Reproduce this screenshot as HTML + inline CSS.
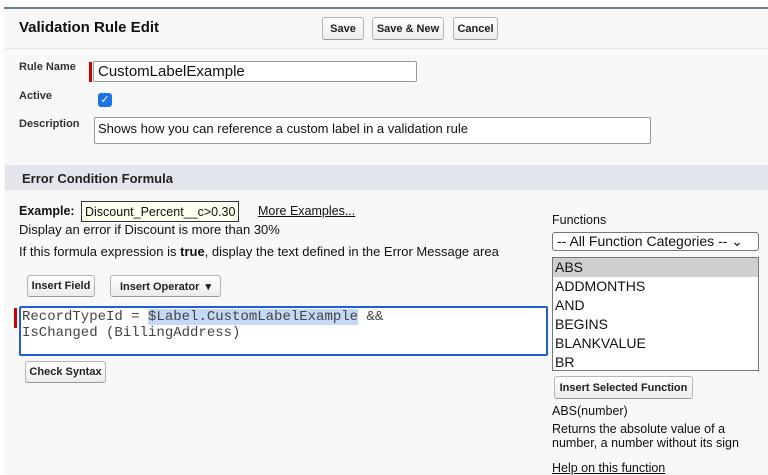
<!DOCTYPE html>
<html><head><style>
*{box-sizing:border-box}
body{margin:0;width:768px;height:475px;overflow:hidden;background:#fff;font-family:"Liberation Sans",sans-serif;font-size:12.5px;color:#111;position:relative}
.a{position:absolute}
.pg{left:4px;top:7px;width:764px;height:468px;background:#f8f8f8;border-top:2px solid #6f7d92}
.btn{position:absolute;border:1px solid #b5b5b5;border-bottom-color:#999;border-radius:3px;background:linear-gradient(#fff,#ececec);font-weight:bold;font-size:11px;display:flex;align-items:center;justify-content:center;color:#222}
.lbl{position:absolute;font-weight:bold;font-size:11px;color:#333}
.inp{position:absolute;background:#fff;border:1px solid #999;border-radius:2px}
</style></head><body>
<div class="a pg"></div>
<div class="a" style="left:19px;top:19px;font-size:15px;font-weight:bold">Validation Rule Edit</div>
<div class="btn" style="left:322px;top:17px;width:42px;height:23px">Save</div>
<div class="btn" style="left:372px;top:17px;width:72px;height:23px">Save &amp; New</div>
<div class="btn" style="left:453px;top:17px;width:45px;height:23px">Cancel</div>
<div class="a" style="left:5px;top:48px;width:763px;height:1px;background:#e4e4e4"></div>
<div class="lbl" style="left:19px;top:61px">Rule Name</div>
<div class="a" style="left:89px;top:62px;width:3px;height:20px;background:#c00"></div>
<div class="inp" style="left:93px;top:61px;width:324px;height:21px;font-size:15px;padding:1px 4px">CustomLabelExample</div>
<div class="lbl" style="left:19px;top:90px">Active</div>
<div class="a" style="left:98px;top:93px;width:14px;height:14px;background:#1a73e8;border-radius:3px;color:#fff;font-size:11px;text-align:center;line-height:14px">✓</div>
<div class="lbl" style="left:19px;top:118px">Description</div>
<div class="inp" style="left:94px;top:117px;width:557px;height:27px;padding:3px 3px;font-size:13px">Shows how you can reference a custom label in a validation rule</div>
<div class="a" style="left:5px;top:165px;width:763px;height:25px;background:#e3e6ec"></div>
<div class="a" style="left:22px;top:171px;font-size:13px;font-weight:bold;color:#222">Error Condition Formula</div>
<div class="a" style="left:19px;top:204px;font-weight:bold;font-size:12.5px">Example:</div>
<div class="a" style="left:81px;top:201px;width:158px;height:21px;background:#fffff0;border:1px solid #333;font-size:12.5px;padding:3px 3px;white-space:nowrap">Discount_Percent__c&gt;0.30</div>
<div class="a" style="left:258px;top:204px;text-decoration:underline">More Examples...</div>
<div class="a" style="left:19px;top:222px;font-size:13px">Display an error if Discount is more than 30%</div>
<div class="a" style="left:19px;top:244px;font-size:13px">If this formula expression is <b>true</b>, display the text defined in the Error Message area</div>
<div class="btn" style="left:27px;top:275px;width:68px;height:22px">Insert Field</div>
<div class="btn" style="left:110px;top:275px;width:111px;height:22px">Insert Operator &nbsp;▾</div>
<div class="a" style="left:14px;top:308px;width:3px;height:20px;background:#c00"></div>
<div class="a" style="left:19px;top:306px;width:529px;height:50px;background:#fff;border:2px solid #1f5fd6;border-radius:2px;font-family:'Liberation Mono',monospace;font-size:14px;color:#444;padding:1px 1px;line-height:16px;white-space:nowrap">RecordTypeId = <span style="background:#c5d8f5">$Label.CustomLabelExample</span> &amp;&amp;<br>IsChanged (BillingAddress)</div>
<div class="btn" style="left:25px;top:361px;width:81px;height:22px">Check Syntax</div>
<div class="a" style="left:552px;top:213px">Functions</div>
<div class="a" style="left:552px;top:232px;width:207px;height:19px;background:#fff;border:1px solid #777;border-radius:3px;font-size:14px;padding:0 4px;line-height:17px">-- All Function Categories -- ⌄</div>
<div class="a" style="left:552px;top:257px;width:207px;height:114px;background:#fff;border:1px solid #777;font-size:14px;line-height:19px">
<div style="background:#cfcfcf;padding-left:2px">ABS</div><div style="padding-left:2px">ADDMONTHS</div><div style="padding-left:2px">AND</div><div style="padding-left:2px">BEGINS</div><div style="padding-left:2px">BLANKVALUE</div><div style="padding-left:2px">BR</div></div>
<div class="btn" style="left:554px;top:376px;width:139px;height:23px">Insert Selected Function</div>
<div class="a" style="left:552px;top:404px">ABS(number)</div>
<div class="a" style="left:552px;top:422px;line-height:14px">Returns the absolute value of a<br>number, a number without its sign</div>
<div class="a" style="left:552px;top:461px;text-decoration:underline">Help on this function</div>
</body></html>
